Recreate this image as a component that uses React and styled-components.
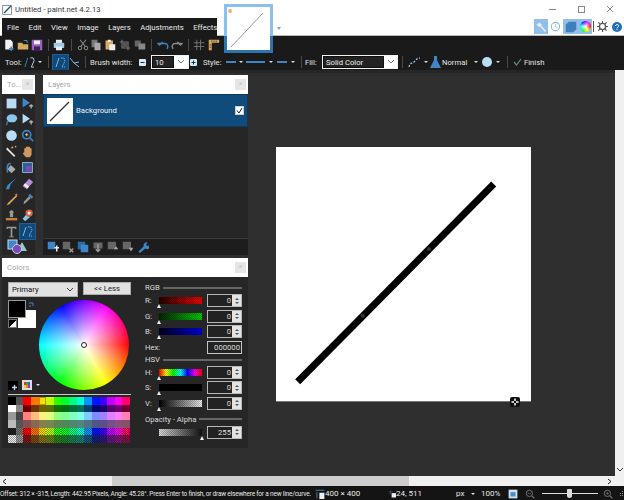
import React from "react";
import styled, { createGlobalStyle } from "styled-components";

const Global = createGlobalStyle`
  html, body { margin: 0; padding: 0; background: #fff; }
  * { box-sizing: border-box; }
`;

const Frame = styled.div`
  position: relative;
  width: 624px;
  height: 500px;
  overflow: hidden;
  display: flex;
  flex-direction: column;
  background: #fff;
  font-family: Roboto, "Open Sans", sans-serif;
  font-size: 7.7px;
  color: #e6e6e6;
`;

const TitleBar = styled.div`
  height: 18px;
  display: flex;
  align-items: center;
  padding-left: 2px;
  color: #333;
`;

const TitleText = styled.span`
  margin-left: 2px;
`;

const WindowButtons = styled.div`
  margin-left: auto;
  display: flex;
  align-items: center;
`;

const WindowButton = styled.div`
  width: ${({ $w }) => $w}px;
  height: 16px;
  display: flex;
  align-items: center;
  justify-content: center;
`;

const MenuRow = styled.div`
  height: 18px;
  display: flex;
  align-items: center;
  padding-left: 2px;
  border-bottom: 1px solid #bbb;
`;

const MenuBar = styled.div`
  width: 215px;
  height: 19px;
  margin-bottom: -1px;
  padding-left: 5px;
  display: flex;
  align-items: center;
  gap: 9.5px;
  background: #1a1a1a;
  color: #e8e8e8;
`;

const Utilities = styled.div`
  margin-left: auto;
  height: 16px;
  display: flex;
  align-items: center;
`;

const UtilityButton = styled.div`
  width: ${({ $w }) => $w}px;
  height: 15px;
  display: flex;
  align-items: center;
  justify-content: center;
  background: ${({ $on }) => ($on ? "#8fc1ea" : "transparent")};
`;

const UtilitySep = styled.div`
  width: 1px;
  height: 11px;
  margin: 0 1px;
  background: #555;
`;

const Toolbar = styled.div`
  height: ${({ $h }) => $h}px;
  display: flex;
  align-items: center;
  padding-left: ${({ $pad }) => $pad}px;
  background: #1a1a1a;
  white-space: nowrap;
`;

const Slot = styled.div`
  width: ${({ $w }) => $w}px;
  height: 15px;
  flex: none;
  display: flex;
  align-items: center;
  justify-content: center;
  background: ${({ $on }) => ($on ? "#11487a" : "transparent")};
  outline: ${({ $on }) => ($on ? "1px solid #1e6099" : "none")};
`;

const Divider = styled.div`
  width: 1px;
  height: 12px;
  background: #4a4a4a;
`;

const ToolText = styled.span`
  width: ${({ $w }) => $w}px;
  flex: none;
  padding-left: ${({ $pl }) => $pl || 0}px;
  color: #e4e4e4;
`;

const Caret = styled.i`
  width: 0;
  height: 0;
  border-left: 2.5px solid transparent;
  border-right: 2.5px solid transparent;
  border-top: 2.5px solid #ddd;
`;

const ComboBox = styled.div`
  width: ${({ $w }) => $w}px;
  height: 14px;
  flex: none;
  display: flex;
  margin-left: ${({ $ml }) => $ml || 0}px;
  border: 1px solid #f2f2f2;
  background: #fff;
`;

const ComboField = styled.div`
  flex: 1;
  padding-left: 2px;
  line-height: 11px;
  background: #222;
  color: #eee;
  border: 1px solid #111;
`;

const ComboArrow = styled.div`
  width: ${({ $w }) => $w}px;
  display: flex;
  align-items: center;
  justify-content: center;
`;

const Thumbnail = styled.div`
  position: absolute;
  left: 224px;
  top: 4px;
  width: 49px;
  height: 49px;
  padding: 3px;
  background: linear-gradient(#8cc0ec 0, #8cc0ec 32px, #2e74b0 32px);
`;

const ThumbSheet = styled.div`
  width: 100%;
  height: 100%;
  background: #fff;
`;

const TabMenu = styled.i`
  position: absolute;
  left: 277px;
  top: 27px;
  width: 0;
  height: 0;
  border-left: 2.5px solid transparent;
  border-right: 2.5px solid transparent;
  border-top: 3px solid #7aa8d0;
`;

const ViewRow = styled.div`
  flex: 1;
  min-height: 0;
  display: flex;
`;

const Workspace = styled.div`
  position: relative;
  flex: 1;
  padding: 77px 0 0 276px;
  background: #2f2f2f;
  border-top: 3px solid #262626;
`;

const Canvas = styled.div`
  position: relative;
  width: 255px;
  height: 255px;
  margin-top: -3px;
  background: #fff;
  border-bottom: 1px solid #777;
`;

const MoveHandle = styled.div`
  position: absolute;
  left: 234px;
  top: 250px;
  width: 10px;
  height: 10px;
  display: flex;
`;

const VScroll = styled.div`
  width: 9px;
  display: flex;
  flex-direction: column;
  justify-content: flex-end;
  align-items: center;
  padding-bottom: 3px;
  background: #f0f0f0;
`;

const HScroll = styled.div`
  height: 11px;
  display: flex;
  align-items: center;
  background: #f0f0f0;
  border-bottom: 1px solid #111;
`;

const ScrollArrow = styled.div`
  width: ${({ $w }) => $w}px;
  flex: none;
  display: flex;
  align-items: center;
  justify-content: center;
`;

const ScrollThumb = styled.div`
  width: 297px;
  height: 100%;
  flex: none;
  background: #cdcdcd;
`;

const StatusBar = styled.div`
  height: 13px;
  display: flex;
  align-items: center;
  background: #141414;
  color: #e8e8e8;
  white-space: nowrap;
`;

const StatusMessage = styled.span`
  width: 314px;
  flex: none;
  font-size: 6.5px;
  letter-spacing: -0.2px;
`;

const StatusValue = styled.span`
  width: ${({ $w }) => $w}px;
  flex: none;
  padding-left: ${({ $pl }) => $pl || 0}px;
  font-size: 8px;
`;

const ZoomTrack = styled.div`
  position: relative;
  width: 56px;
  height: 1px;
  flex: none;
  background: #ddd;
`;

const ZoomKnob = styled.div`
  position: absolute;
  left: 25px;
  top: -4px;
  width: 5px;
  height: 9px;
  background: #ddd;
  border-radius: 1px 1px 3px 3px;
`;

/* floating tool windows */
const Panel = styled.div`
  position: absolute;
  left: ${({ $x }) => $x}px;
  top: ${({ $y }) => $y}px;
  width: ${({ $w }) => $w}px;
  height: ${({ $h }) => $h}px;
  display: flex;
  flex-direction: column;
  background: #262626;
`;

const PanelHeader = styled.div`
  height: 19px;
  flex: none;
  display: flex;
  align-items: center;
  justify-content: space-between;
  padding: 0 2px 0 5px;
  background: #fff;
  color: #a6a6a6;
`;

const CloseBox = styled.div`
  width: 11px;
  height: 11px;
  background: #e6e6e6;
  color: #c4c4c4;
  font-size: 7px;
  line-height: 11px;
  text-align: center;
`;

const ToolGrid = styled.div`
  display: grid;
  grid-template-columns: 16px 16px;
  grid-auto-rows: 16px;
  padding: 1px 0 0 1px;
  place-items: center;
`;

const ToolCell = styled.div`
  width: 15px;
  height: 15px;
  display: flex;
  align-items: center;
  justify-content: center;
  background: ${({ $on }) => ($on ? "#11487a" : "transparent")};
  outline: ${({ $on }) => ($on ? "1px solid #1e6099" : "none")};
`;

const ShapesCell = styled.div`
  grid-column: span 2;
  width: 24px;
  height: 16px;
  display: flex;
`;

const LayerRow = styled.div`
  height: 33px;
  flex: none;
  display: flex;
  align-items: center;
  padding: 0 3px 0 3px;
  background: #0f4c7c;
  border: 1px solid #0b3a60;
  color: #f2f2f2;
`;

const LayerThumb = styled.div`
  width: 26px;
  height: 26px;
  flex: none;
  margin-right: 3px;
  background: #fff;
`;

const LayerCheck = styled.div`
  width: 9px;
  height: 9px;
  margin-left: auto;
  display: flex;
  background: #fff;
  border: 1px solid #ccc;
`;

const LayerSpace = styled.div`
  flex: 1;
`;

const LayerTools = styled.div`
  height: 17px;
  flex: none;
  display: flex;
  align-items: center;
  padding-left: 3px;
  gap: 1px;
  background: #1d1d1d;
  border-top: 1px solid #3a3a3a;
`;

const ColorsBody = styled.div`
  flex: 1;
  display: flex;
  padding: 5px 6px 0;
`;

const ColorsLeft = styled.div`
  width: 123px;
  flex: none;
  margin-right: 14px;
`;

const ColorsRight = styled.div`
  width: 97px;
  flex: none;
`;

const TopControls = styled.div`
  display: flex;
  gap: 5px;
  height: 18px;
`;

const PickerSelect = styled.div`
  width: 70px;
  height: 15px;
  display: flex;
  align-items: center;
  justify-content: space-between;
  padding: 0 3px;
  background: #e1e1e1;
  border: 1px solid #adadad;
  color: #111;
`;

const LessButton = styled.div`
  width: 48px;
  height: 13px;
  line-height: 11px;
  text-align: center;
  background: #e1e1e1;
  border: 1px solid #adadad;
  color: #222;
`;

const PickerRow = styled.div`
  display: flex;
  height: 90px;
`;

const SwatchColumn = styled.div`
  width: 31px;
  flex: none;
  display: flex;
  flex-direction: column;
  justify-content: space-between;
`;

const SwatchStack = styled.div`
  position: relative;
  width: 29px;
  height: 28px;
`;

const PrimarySwatch = styled.div`
  position: absolute;
  left: 0;
  top: 0;
  width: 18px;
  height: 18px;
  z-index: 1;
  background: #000;
  border: 1px solid #999;
`;

const SecondarySwatch = styled.div`
  position: absolute;
  left: 10px;
  top: 10px;
  width: 18px;
  height: 18px;
  background: #fff;
`;

const MiniSwatch = styled.div`
  position: absolute;
  left: 0;
  top: 19px;
  width: 9px;
  height: 9px;
  background: linear-gradient(135deg, #000 55%, #fff 55%);
  border: 1px solid #777;
`;

const ResetSwap = styled.div`
  position: absolute;
  left: 20px;
  top: 1px;
  display: flex;
`;

const PaletteTools = styled.div`
  display: flex;
  align-items: center;
  white-space: nowrap;
`;

const AddSwatch = styled.div`
  width: 10px;
  height: 9px;
  margin-right: 4px;
  display: flex;
  background: #000;
`;

const PaletteMenu = styled.div`
  width: 10px;
  height: 10px;
  margin-right: 4px;
  display: flex;
`;

const Wheel = styled.div`
  position: relative;
  width: ${({ $size }) => $size}px;
  height: ${({ $size }) => $size}px;
  border-radius: 50%;
  background: radial-gradient(circle closest-side, #fff 0, rgba(255, 255, 255, 0.75) 25%, rgba(255, 255, 255, 0) 100%),
    conic-gradient(from 90deg, #f00, #ff0, #0f0, #0ff, #00f, #f0f, #f00);
`;

const WheelMarker = styled.div`
  position: absolute;
  left: 42px;
  top: 42px;
  width: 6px;
  height: 6px;
  border: 1px solid #222;
  border-radius: 50%;
`;

const PaletteRule = styled.div`
  height: 1px;
  margin: 4px 0 2px;
  background: #c8c8c8;
`;

const Palette = styled.div`
  display: grid;
  grid-template-columns: repeat(16, 1fr);
  grid-auto-rows: 7.7px;
  width: 122px;
`;

const PaletteCell = styled.div`
  background-image: ${({ $dither }) =>
    $dither ? "repeating-conic-gradient(rgba(0,0,0,.35) 0 25%, transparent 0 50%)" : "none"};
  background-size: 2px 2px;
  box-shadow: ${({ $current }) => ($current ? "inset 0 0 0 1px #b89400" : "none")};
`;

const GroupHead = styled.div`
  display: flex;
  align-items: center;
  gap: 3px;
  height: ${({ $h }) => $h}px;
  margin-top: ${({ $mt }) => $mt || 0}px;
  color: #ddd;
  white-space: nowrap;
`;

const GroupLine = styled.div`
  flex: 1;
  height: 2px;
  background: #666;
`;

const SliderRow = styled.div`
  display: flex;
  align-items: center;
  height: 15.5px;
  color: #ddd;
`;

const SliderLabel = styled.span`
  width: 14px;
  flex: none;
`;

const SliderBar = styled.div`
  position: relative;
  width: 43px;
  height: 7px;
  flex: none;
  margin-right: 5px;
  background: repeating-conic-gradient(rgba(0, 0, 0, 0.22) 0 25%, transparent 0 50%) 0 0 / 2px 2px,
    ${({ $fill }) => $fill};
`;

const SliderTick = styled.i`
  position: absolute;
  left: ${({ $end }) => ($end ? "41px" : "-2px")};
  bottom: -4px;
  width: 0;
  height: 0;
  border-left: 2px solid transparent;
  border-right: 2px solid transparent;
  border-bottom: 4px solid #eee;
`;

const HexLabel = styled.span`
  width: 62px;
  flex: none;
`;

const HexField = styled.div`
  width: 35px;
  height: 13px;
  line-height: 11px;
  text-align: right;
  padding-right: 1px;
  background: #232323;
  border: 1px solid #c4c4c4;
  color: #ddd;
`;

const Spinner = styled.div`
  width: 35px;
  height: 13px;
  flex: none;
  display: flex;
  border: 1px solid #b8b8b8;
  background: #222;
`;

const SpinValue = styled.div`
  flex: 1;
  line-height: 11px;
  padding-right: 1px;
  text-align: right;
  color: #ddd;
`;

const SpinArrows = styled.div`
  width: 9px;
  display: flex;
  flex-direction: column;
  align-items: center;
  justify-content: space-evenly;
  background: #e4e4e4;
`;

const SpinTriangle = styled.i`
  width: 0;
  height: 0;
  border-left: 2px solid transparent;
  border-right: 2px solid transparent;
  border-${({ $down }) => ($down ? "top" : "bottom")}: 2px solid #555;
`;

const OpacityGap = styled.div`
  width: 14px;
  flex: none;
`;

const Ico = ({ s = 14, children }) => (
  <svg width={s} height={s} viewBox="0 0 16 16" fill="none">
    {children}
  </svg>
);

const BLUE = "#3f86c6";
const LIGHT = "#b9dcf5";
const GREY = "#8a8a8a";
const TAN = "#d8a860";

const Chevron = ({ c = "#444" }) => (
  <svg width="8" height="6" viewBox="0 0 8 6" fill="none">
    <path d="M1 1l3 3 3-3" stroke={c} strokeWidth="1" />
  </svg>
);

const LineIcon = ({ w = 12, h = 12 }) => (
  <svg width={w} height={h} viewBox="0 0 12 12" fill="none">
    <path d="M1 11L4 1" stroke={BLUE} strokeWidth="1" />
    <path d="M7 1h3l1 3-3 7h3" stroke={LIGHT} strokeWidth="1" />
  </svg>
);

const file = {
  newDoc: <Ico><path d="M3 1h7l3 3v10H3z" fill="#f2f2f2" /><path d="M10 10h2v2h2v2h-2v2h-2v-2H8v-2h2z" fill={BLUE} /></Ico>,
  open: <Ico><path d="M1 5h6l1 2h7v7H1z" fill={TAN} /><path d="M9 2l4 0 1 3" stroke={BLUE} strokeWidth="1.5" /></Ico>,
  save: <Ico><rect x="1" y="1" width="14" height="14" fill="#9a5fc2" /><rect x="4" y="2" width="8" height="5" fill="#eee" /><rect x="4" y="10" width="8" height="5" fill="#3c2350" /></Ico>,
  print: <Ico><rect x="4" y="1" width="8" height="5" fill="#eee" /><rect x="1" y="5" width="14" height="7" rx="1" fill="#9ccbe9" /><rect x="4" y="10" width="8" height="5" fill="#eee" /></Ico>,
  cut: <Ico><path d="M4 1l7 9M12 1L5 10" stroke={GREY} strokeWidth="1.4" /><circle cx="4" cy="12" r="2.4" stroke={GREY} strokeWidth="1.3" /><circle cx="12" cy="12" r="2.4" stroke={GREY} strokeWidth="1.3" /></Ico>,
  copy: <Ico><rect x="2" y="1" width="8" height="10" fill="#777" /><rect x="6" y="5" width="8" height="10" fill="#aaa" /></Ico>,
  paste: <Ico><rect x="2" y="2" width="10" height="12" fill={TAN} /><rect x="5" y="1" width="4" height="3" fill="#eee" /><rect x="7" y="7" width="8" height="8" fill="#eee" /></Ico>,
  crop: <Ico><path d="M4 1v11h11M1 4h11v11" stroke="#777" strokeWidth="1.5" /><rect x="5" y="5" width="6" height="6" fill="#555" /></Ico>,
  deselect: <Ico><rect x="1" y="2" width="8" height="8" fill="#666" /><rect x="6" y="6" width="9" height="8" fill="#888" /></Ico>,
  undo: <Ico><path d="M2 6h8a4 4 0 0 1 3 7" stroke={BLUE} strokeWidth="1.8" /><path d="M5 2v6H1" stroke={BLUE} strokeWidth="1.8" transform="rotate(45 4 6)" /></Ico>,
  redo: <Ico><path d="M14 6H6a4 4 0 0 0-3 7" stroke={GREY} strokeWidth="1.8" /><path d="M11 2v6h4" stroke={GREY} strokeWidth="1.8" transform="rotate(-45 12 6)" /></Ico>,
  grid: <Ico><path d="M5 1v14M10 1v14M1 5h14M1 10h14" stroke="#777" strokeWidth="1.2" /></Ico>,
  rulers: <Ico><path d="M1 1h14v4H5v10H1z" fill={TAN} /><path d="M5 2v2M8 2v2M11 2v2M2 8h2M2 11h2" stroke="#333" /></Ico>,
};

const fileTools = [
  ["newDoc", 14], ["open", 13], ["save", 16], null, ["print", 14], null, ["cut", 13],
  ["copy", 14], ["paste", 14], ["crop", 15], ["deselect", 15], null, ["undo", 15], ["redo", 14], null,
  ["grid", 14], ["rulers", 15],
];
const dividerWidths = [7, 10, 8, 8];

const tools = [
  <Ico><rect x="2" y="2" width="12" height="12" fill={LIGHT} /></Ico>,
  <Ico><path d="M2 1l9 6-9 6z" fill={BLUE} /><path d="M10 11h5M12.5 9v5" stroke="#bbb" strokeWidth="1.5" /></Ico>,
  <Ico><ellipse cx="8.5" cy="6.5" rx="6.5" ry="5" fill="#8cc4ec" /><path d="M3 10l-1 5" stroke={BLUE} strokeWidth="1.5" /></Ico>,
  <Ico><path d="M2 1l9 6-9 6z" fill={LIGHT} /><path d="M10 11h5M12.5 9v5" stroke="#bbb" strokeWidth="1.5" /></Ico>,
  <Ico><circle cx="8" cy="8" r="6.5" fill={LIGHT} /></Ico>,
  <Ico><circle cx="7" cy="7" r="5" stroke={BLUE} strokeWidth="2" /><path d="M11 11l4 4" stroke={BLUE} strokeWidth="2" /><path d="M5 7h4M7 5v4" stroke="#ddd" /></Ico>,
  <Ico><path d="M2 4l10 10" stroke="#ddd" strokeWidth="2.2" /><circle cx="9" cy="3" r="1.3" fill={TAN} /><circle cx="13" cy="2" r="1" fill={TAN} /></Ico>,
  <Ico><path d="M4 9V4h2V2h5v2h2v8l-2 3H6L2 10z" fill="#cf9860" /></Ico>,
  <Ico><path d="M7 5l6 5-5 5-5-5z" fill="#aaa" /><path d="M3 14V7a4 4 0 0 1 4-4" stroke={BLUE} strokeWidth="2" /></Ico>,
  <Ico><rect x="2" y="2" width="12" height="12" fill="#2c5f90" stroke="#9cc8ea" /><rect x="6" y="6" width="7" height="7" fill="#7a4bb0" /></Ico>,
  <Ico><path d="M14 1L7 9l-2 6H1l2-5z" fill={BLUE} /></Ico>,
  <Ico><path d="M10 2l5 4-8 9-5-4z" fill="#b98ad8" /><path d="M4 9l5 4" stroke="#eee" strokeWidth="3" /></Ico>,
  <Ico><path d="M14 2L4 12l-2 3 3-1L15 4z" fill={TAN} /><path d="M13 1l2 2" stroke="#d66" strokeWidth="2" /></Ico>,
  <Ico><path d="M4 10l6-6 2 2-6 6-3 2z" fill="#9a9a9a" /><path d="M11 1l4 4-2 2-4-4z" fill={BLUE} /></Ico>,
  <Ico><circle cx="8" cy="4" r="2.5" fill="#999" /><path d="M6 6h4v4H6z" fill="#999" /><path d="M1 11h14v3H1z" fill="#c97f3c" /></Ico>,
  <Ico><path d="M5 15l-3-3 5-6 4 4z" fill="#8cc4ec" /><circle cx="10" cy="5" r="4.5" fill="#d9603c" /><circle cx="10" cy="5" r="2" fill="#eee" /></Ico>,
  <Ico><path d="M2 2h12v3h-1l-1-1H9v10h2v1H5v-1h2V4H4L3 5H2z" fill="#9a9a9a" /></Ico>,
];

const PathToolIcon = () => (
  <svg width="13" height="13" viewBox="0 0 13 13" fill="none">
    <path d="M2 11L5 2" stroke="#7db7e6" strokeWidth="1" />
    <path d="M7 2h3l1 3-3 6h3" stroke="#7db7e6" strokeWidth="1" strokeDasharray="1.5 1" />
  </svg>
);

const layerIcons = [
  <Ico><rect x="1" y="1" width="10" height="10" fill={BLUE} /><path d="M10 9h6M13 6v8" stroke="#eee" strokeWidth="2" /></Ico>,
  <Ico><rect x="1" y="1" width="10" height="10" fill="#666" /><path d="M10 10l5 5M15 10l-5 5" stroke="#999" strokeWidth="2" /></Ico>,
  <Ico><rect x="1" y="1" width="10" height="10" fill="#2c6aa6" /><rect x="5" y="5" width="10" height="10" fill="#3f86c6" /></Ico>,
  <Ico><rect x="2" y="2" width="12" height="8" fill="#666" /><path d="M8 4v9M5 11l3 3 3-3" stroke="#999" strokeWidth="2" /></Ico>,
  <Ico><rect x="1" y="1" width="11" height="10" fill="#666" /><path d="M9 11h6l-3-4z" fill="#aaa" /></Ico>,
  <Ico><rect x="1" y="1" width="11" height="10" fill="#666" /><path d="M9 9h6l-3 5z" fill="#aaa" /></Ico>,
  <Ico><path d="M2 14l7-7a4 4 0 0 1 5-5l-2 3 2 2 3-2a4 4 0 0 1-6 5l-7 6z" fill={BLUE} /></Ico>,
];

const hues = [0, 28, 52, 75, 110, 130, 150, 170, 205, 235, 255, 285, 305, 335];
const paletteRows = [
  { greys: ["#000", "#555"], s: 100, l: 50 },
  { greys: ["#fff", "#888"], s: 100, l: 22 },
  { greys: ["#999", "#444"], s: 100, l: 75 },
  { greys: ["#bbb", "#555"], s: 25, l: 42 },
  { greys: ["#222", "#777"], s: 100, l: 50, dither: true },
  { greys: ["#eee", "#999"], s: 70, l: 30, dither: true },
];

const Spin = ({ value }) => (
  <Spinner>
    <SpinValue>{value}</SpinValue>
    <SpinArrows>
      <SpinTriangle />
      <SpinTriangle $down />
    </SpinArrows>
  </Spinner>
);

const sliders = {
  rgb: [
    ["R:", "linear-gradient(90deg,#200,#e00)"],
    ["G:", "linear-gradient(90deg,#020,#0c0)"],
    ["B:", "linear-gradient(90deg,#002,#00d)"],
  ],
  hsv: [
    ["H:", "linear-gradient(90deg,#f00,#ff0,#0f0,#0ff,#00f,#f0f,#f00)"],
    ["S:", "#000"],
    ["V:", "linear-gradient(90deg,#000,#eee)"],
  ],
};

const Slider = ({ label, fill }) => (
  <SliderRow>
    <SliderLabel>{label}</SliderLabel>
    <SliderBar $fill={fill}>
      <SliderTick />
    </SliderBar>
    <Spin value="0" />
  </SliderRow>
);

export default function App() {
  let dividerIndex = 0;
  return (
    <Frame>
      <Global />
      <TitleBar>
        <Ico s={11}>
          <rect x="1" y="2" width="13" height="13" fill="#fff" stroke="#4a6a90" />
          <path d="M3 13L13 3" stroke="#355" strokeWidth="2" />
        </Ico>
        <TitleText>Untitled - paint.net 4.2.13</TitleText>
        <WindowButtons>
          <WindowButton $w={28}><svg width="7" height="1"><rect width="7" height="1" fill="#888" /></svg></WindowButton>
          <WindowButton $w={30}><svg width="7" height="7"><rect x=".5" y=".5" width="6" height="6" stroke="#888" fill="none" /></svg></WindowButton>
          <WindowButton $w={28}><svg width="8" height="8"><path d="M1 1l6 6M7 1L1 7" stroke="#888" /></svg></WindowButton>
        </WindowButtons>
      </TitleBar>
      <MenuRow>
        <MenuBar>
          <span>File</span><span>Edit</span><span>View</span><span>Image</span>
          <span>Layers</span><span>Adjustments</span><span>Effects</span>
        </MenuBar>
        <Utilities>
          <UtilityButton $w={14} $on>
            <Ico s={12}><path d="M2 5l4-3 3 3-3 3z" fill="#eee" /><path d="M7 6l7 8" stroke="#eee" strokeWidth="2" /></Ico>
          </UtilityButton>
          <UtilityButton $w={15}>
            <Ico s={11}><circle cx="8" cy="8" r="6" stroke="#8cb8dc" strokeWidth="1.5" /><path d="M8 4v4l3 2" stroke="#8cb8dc" /></Ico>
          </UtilityButton>
          <UtilityButton $w={15} $on>
            <Ico s={12}><path d="M5 1h10v10l-4 4H1V5z" fill="#3f7fbb" /></Ico>
          </UtilityButton>
          <UtilityButton $w={14} $on>
            <Wheel $size={11} />
          </UtilityButton>
          <UtilitySep />
          <UtilityButton $w={15}>
            <Ico s={11}><circle cx="8" cy="8" r="4.5" stroke="#555" strokeWidth="2" /><path d="M8 0v3M8 13v3M0 8h3M13 8h3M2 2l2 2M12 12l2 2M14 2l-2 2M4 12l-2 2" stroke="#555" strokeWidth="1.6" /></Ico>
          </UtilityButton>
          <UtilityButton $w={14}>
            <svg width="10" height="10" viewBox="0 0 10 10"><circle cx="5" cy="5" r="5" fill="#1f6db3" /><path d="M3.5 4a1.5 1.5 0 1 1 2.2 1.3c-.5.3-.7.5-.7 1.1" stroke="#fff" fill="none" /><rect x="4.5" y="7.2" width="1" height="1" fill="#fff" /></svg>
          </UtilityButton>
        </Utilities>
      </MenuRow>
      <Toolbar $h={18} $pad={2}>
        {fileTools.map((t, i) =>
          t ? (
            <Slot key={i} $w={t[1]}>{React.cloneElement(file[t[0]], { s: 12 })}</Slot>
          ) : (
            <Slot key={i} $w={dividerWidths[dividerIndex++]}><Divider /></Slot>
          )
        )}
      </Toolbar>
      <Toolbar $h={16} $pad={5}>
        <ToolText $w={18}>Tool:</ToolText>
        <Slot $w={12}><LineIcon w={11} h={11} /></Slot>
        <Slot $w={9}><Caret /></Slot>
        <Slot $w={9}><Divider /></Slot>
        <Slot $w={15} $on><PathToolIcon /></Slot>
        <Slot $w={12}>
          <svg width="11" height="11" viewBox="0 0 11 11" fill="none"><path d="M1 1l4 5 5-1M5 6l5 4" stroke="#7db7e6" /></svg>
        </Slot>
        <Slot $w={10}><Divider /></Slot>
        <ToolText $w={47}>Brush width:</ToolText>
        <Slot $w={10}><svg width="7" height="7"><rect width="7" height="7" rx="1" fill="#d5e8f7" /><rect x="1.5" y="3" width="4" height="1" fill="#134" /></svg></Slot>
        <ComboBox $w={38} $ml={4}>
          <ComboField>10</ComboField>
          <ComboArrow $w={14}><Chevron c="#777" /></ComboArrow>
        </ComboBox>
        <Slot $w={9}><svg width="7" height="7"><rect width="7" height="7" rx="1" fill="#d5e8f7" /><path d="M1.5 3.5h4M3.5 1.5v4" stroke="#134" /></svg></Slot>
        <ToolText $w={26} $pl={5}>Style:</ToolText>
        <Slot $w={14}><svg width="10" height="2"><rect width="10" height="2" fill={BLUE} /></svg></Slot>
        <Slot $w={6}><Caret /></Slot>
        <Slot $w={23}><svg width="19" height="2"><rect width="19" height="2" fill={BLUE} /></svg></Slot>
        <Slot $w={8}><Caret /></Slot>
        <Slot $w={14}><svg width="10" height="2"><rect width="10" height="2" fill={BLUE} /></svg></Slot>
        <Slot $w={8}><Caret /></Slot>
        <Slot $w={8}><Divider /></Slot>
        <ToolText $w={17}>Fill:</ToolText>
        <ComboBox $w={76}>
          <ComboField>Solid Color</ComboField>
          <ComboArrow $w={13}><Chevron c="#777" /></ComboArrow>
        </ComboBox>
        <Slot $w={8}><Divider /></Slot>
        <Slot $w={17}>
          <svg width="13" height="11" viewBox="0 0 13 11" fill="none"><path d="M1 10C2 5 4 7 6 5s3-4 6-4" stroke="#9cc8ea" strokeWidth="1.2" strokeDasharray="2 1.5" /></svg>
        </Slot>
        <Slot $w={5}><Caret /></Slot>
        <Slot $w={14}>
          <svg width="11" height="12" viewBox="0 0 11 12"><path d="M4 0h3v4l4 8H0l4-8z" fill={BLUE} /></svg>
        </Slot>
        <ToolText $w={28}>Normal</ToolText>
        <Slot $w={11}><Caret /></Slot>
        <Slot $w={12}><svg width="10" height="10"><circle cx="5" cy="5" r="5" fill={LIGHT} /></svg></Slot>
        <Slot $w={10}><Caret /></Slot>
        <Slot $w={8}><Divider /></Slot>
        <Slot $w={12}>
          <svg width="9" height="8" viewBox="0 0 9 8" fill="none"><path d="M1 4l2.5 3L8 1" stroke="#5f9088" strokeWidth="1.2" /></svg>
        </Slot>
        <ToolText $w={25} $pl={1}>Finish</ToolText>
      </Toolbar>

      <Thumbnail>
        <ThumbSheet>
          <svg width="43" height="43" viewBox="0 0 43 43" fill="none">
            <path d="M4 40L36 6" stroke="#999" />
            <circle cx="3" cy="4" r="2" fill="#f0b070" />
          </svg>
        </ThumbSheet>
      </Thumbnail>
      <TabMenu />

      <ViewRow>
        <Workspace>
          <Canvas>
            <svg width="255" height="254" viewBox="0 0 255 254" fill="none">
              <path d="M21.7 234.7L217.7 37" stroke="#000" strokeWidth="7" />
              <circle cx="86.7" cy="168.7" r="2" fill="#333" />
              <circle cx="153" cy="102" r="2" fill="#333" />
            </svg>
            <MoveHandle>
              <svg width="10" height="10" viewBox="0 0 10 10">
                <rect width="10" height="10" rx="2" fill="#111" />
                <path d="M5 1.5v7M1.5 5h7" stroke="#fff" strokeWidth="1.5" />
                <rect x="4" y="4" width="2" height="2" fill="#111" />
              </svg>
            </MoveHandle>
          </Canvas>

          <Panel $x={2} $y={2} $w={33} $h={180}>
            <PanelHeader>
              To...
              <CloseBox>×</CloseBox>
            </PanelHeader>
            <ToolGrid>
              {tools.map((icon, i) => (
                <ToolCell key={i}>{React.cloneElement(icon, { s: 13 })}</ToolCell>
              ))}
              <ToolCell $on><PathToolIcon /></ToolCell>
              <ShapesCell>
                <svg width="24" height="16" viewBox="0 0 24 16">
                  <rect x="1" y="1" width="9" height="9" fill={BLUE} stroke="#bcdcf4" />
                  <path d="M15 3l5 9H10z" fill="#8fd0c8" />
                  <circle cx="10" cy="10" r="4.5" fill="#7a4bb0" stroke="#d8c0f0" />
                </svg>
              </ShapesCell>
            </ToolGrid>
          </Panel>

          <Panel $x={43} $y={2} $w={205} $h={180}>
            <PanelHeader>
              Layers
              <CloseBox>×</CloseBox>
            </PanelHeader>
            <LayerRow>
              <LayerThumb>
                <svg width="26" height="26" viewBox="0 0 26 26" fill="none"><path d="M3 23L22 4" stroke="#333" strokeWidth="1.2" /></svg>
              </LayerThumb>
              Background
              <LayerCheck>
                <svg width="7" height="7" viewBox="0 0 7 7" fill="none"><path d="M1 3.5L3 6l3-5" stroke="#123" /></svg>
              </LayerCheck>
            </LayerRow>
            <LayerSpace />
            <LayerTools>
              {layerIcons.map((icon, i) => (
                <Slot key={i} $w={14}>{React.cloneElement(icon, { s: 12 })}</Slot>
              ))}
            </LayerTools>
          </Panel>

          <Panel $x={2} $y={185} $w={246} $h={190}>
            <PanelHeader>
              Colors
              <CloseBox>×</CloseBox>
            </PanelHeader>
            <ColorsBody>
              <ColorsLeft>
                <TopControls>
                  <PickerSelect>Primary<Chevron /></PickerSelect>
                  <LessButton>&lt;&lt; Less</LessButton>
                </TopControls>
                <PickerRow>
                  <SwatchColumn>
                    <SwatchStack>
                      <PrimarySwatch />
                      <SecondarySwatch />
                      <MiniSwatch />
                      <ResetSwap>
                        <svg width="7" height="7" viewBox="0 0 7 7" fill="none"><path d="M1 2h4v3M3 5H1" stroke={BLUE} /></svg>
                      </ResetSwap>
                    </SwatchStack>
                    <PaletteTools>
                      <AddSwatch>
                        <svg width="10" height="9" viewBox="0 0 10 9" fill="none"><path d="M4 6.5h5M6.5 4v5" stroke="#bcdcf4" strokeWidth="1.4" /></svg>
                      </AddSwatch>
                      <PaletteMenu>
                        <svg width="10" height="10" viewBox="0 0 10 10">
                          <rect width="10" height="10" fill="#ddd" />
                          <rect x="2" y="2" width="2" height="3" fill="#d33" /><rect x="4" y="2" width="2" height="3" fill="#3a3" /><rect x="6" y="2" width="2" height="3" fill="#36c" />
                          <rect x="2" y="5" width="2" height="3" fill="#ec3" /><rect x="4" y="5" width="2" height="3" fill="#e83" /><rect x="6" y="5" width="2" height="3" fill="#93c" />
                        </svg>
                      </PaletteMenu>
                      <Caret />
                    </PaletteTools>
                  </SwatchColumn>
                  <Wheel $size={90}><WheelMarker /></Wheel>
                </PickerRow>
                <PaletteRule />
                <Palette>
                  {paletteRows.map((row, r) => (
                    <React.Fragment key={r}>
                      {row.greys.map((g, i) => (
                        <PaletteCell key={i} $dither={row.dither} style={{ backgroundColor: g }} />
                      ))}
                      {hues.map((h) => (
                        <PaletteCell
                          key={h}
                          $dither={row.dither}
                          $current={r === 0 && h === 52}
                          style={{ backgroundColor: `hsl(${h} ${row.s}% ${row.l}%)` }}
                        />
                      ))}
                    </React.Fragment>
                  ))}
                </Palette>
              </ColorsLeft>
              <ColorsRight>
                <GroupHead $h={11}>RGB<GroupLine /></GroupHead>
                {sliders.rgb.map(([label, fill]) => (
                  <Slider key={label} label={label} fill={fill} />
                ))}
                <SliderRow>
                  <HexLabel>Hex:</HexLabel>
                  <HexField>000000</HexField>
                </SliderRow>
                <GroupHead $h={9.5}>HSV<GroupLine /></GroupHead>
                {sliders.hsv.map(([label, fill]) => (
                  <Slider key={label} label={label} fill={fill} />
                ))}
                <GroupHead $h={10.5} $mt={3}>Opacity - Alpha<GroupLine /></GroupHead>
                <SliderRow>
                  <OpacityGap />
                  <SliderBar $fill="linear-gradient(90deg,#ddd,#111)">
                    <SliderTick $end />
                  </SliderBar>
                  <Spin value="255" />
                </SliderRow>
              </ColorsRight>
            </ColorsBody>
          </Panel>
        </Workspace>
        <VScroll><Chevron c="#333" /></VScroll>
      </ViewRow>

      <HScroll>
        <ScrollArrow $w={9}><svg width="5" height="7" viewBox="0 0 5 7" fill="none"><path d="M4 1L1 3.5 4 6" stroke="#222" /></svg></ScrollArrow>
        <ScrollArrow $w={103} />
        <ScrollThumb />
        <ScrollArrow $w={196} />
        <ScrollArrow $w={9}><svg width="5" height="7" viewBox="0 0 5 7" fill="none"><path d="M1 1l3 2.5L1 6" stroke="#222" /></svg></ScrollArrow>
      </HScroll>

      <StatusBar>
        <StatusMessage>Offset: 312 × -315, Length: 442.95 Pixels, Angle: 45.28°. Press Enter to finish, or draw elsewhere for a new line/curve.</StatusMessage>
        <Slot $w={11}><Ico s={10}><rect x="7" y="6" width="8" height="10" fill="#eee" /><path d="M1 2h14M3 5v10" stroke={BLUE} strokeWidth="1.5" /></Ico></Slot>
        <StatusValue $w={64}>400 × 400</StatusValue>
        <Slot $w={7}><Ico s={8}><rect x="6" y="6" width="10" height="10" fill="#eee" /><path d="M0 3h9M3 0v9" stroke={BLUE} /></Ico></Slot>
        <StatusValue $w={60}>24, 511</StatusValue>
        <StatusValue $w={12}>px</StatusValue>
        <Slot $w={9}><Caret /></Slot>
        <StatusValue $w={31} $pl={4}>100%</StatusValue>
        <Slot $w={10}><Ico s={10}><rect x="1" y="1" width="14" height="14" fill="#cfe2f2" /><rect x="4" y="5" width="8" height="7" fill="#4d8cc4" /></Ico></Slot>
        <Slot $w={24}><Ico s={10}><circle cx="7" cy="7" r="5" stroke="#777" strokeWidth="1.5" /><path d="M4.5 7h5" stroke="#777" /><path d="M11 11l4 4" stroke="#777" strokeWidth="2" /></Ico></Slot>
        <ZoomTrack><ZoomKnob /></ZoomTrack>
        <Slot $w={20}><Ico s={10}><circle cx="7" cy="7" r="5" stroke="#777" strokeWidth="1.5" /><path d="M4.5 7h5M7 4.500v5" stroke="#777" /><path d="M11 11l4 4" stroke="#777" strokeWidth="2" /></Ico></Slot>
        <Slot $w={6}>
          <svg width="5" height="6" viewBox="0 0 5 6"><path d="M4 0v1H3V0zM4 2v1H3V2zM2 2v1H1V2zM4 4v1H3V4zM2 4v1H1V4zM0 4v1h-1V4z" fill="#888" /></svg>
        </Slot>
      </StatusBar>
    </Frame>
  );
}
